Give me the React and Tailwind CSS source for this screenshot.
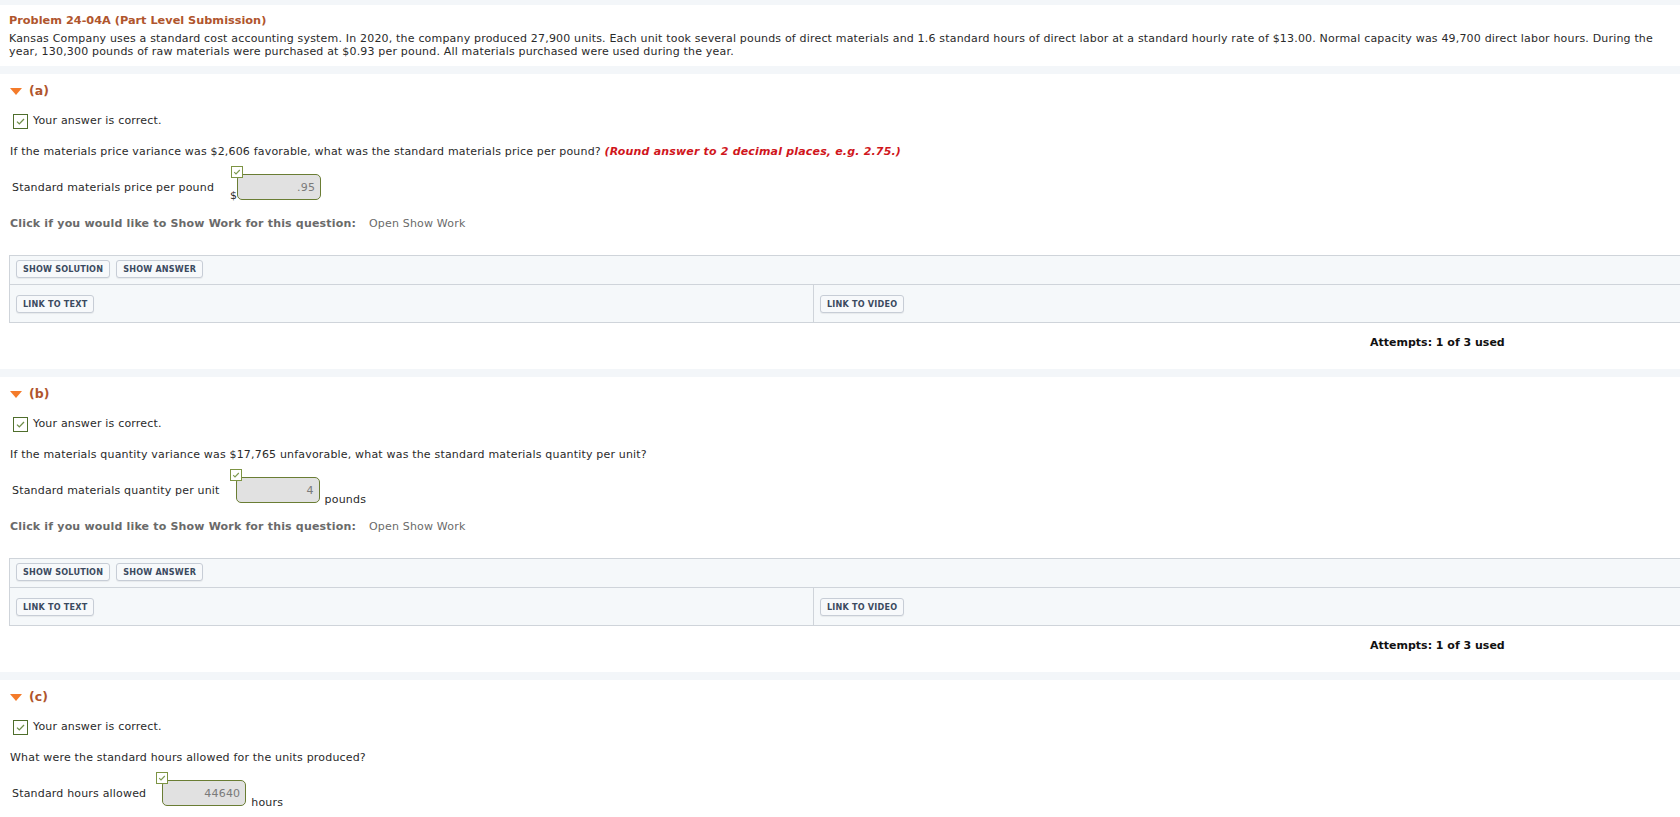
import React from "react";

const F = { fontFamily: '"DejaVu Sans", Verdana, sans-serif' };

function BigCheck() {
  return (
    <svg width="15" height="15" viewBox="0 0 15 15" className="block">
      <rect x="0.5" y="0.5" width="14" height="14" fill="#fff" stroke="#4f6e2c" strokeWidth="1" />
      <path d="M4 7.6 L6.3 9.9 L11 5" fill="none" stroke="#6f8f4a" strokeWidth="1.3" />
    </svg>
  );
}

function SmallCheck() {
  return (
    <svg width="12" height="12" viewBox="0 0 12 12" className="block">
      <rect x="0.5" y="0.5" width="11" height="11" fill="#fff" stroke="#7d9443" strokeWidth="1" />
      <path d="M3.2 6.2 L5 8 L8.8 4" fill="none" stroke="#7d9a4f" strokeWidth="1.1" />
    </svg>
  );
}

function Btn({ children }) {
  return (
    <span className="inline-flex items-center h-[18px] px-[6px] rounded-[3px] border border-[#c7cdd6] bg-[#f7f9fb] shadow-[0_1px_1px_rgba(0,0,0,0.06)] text-[8.1px] font-bold tracking-[0.2px] text-[#3b4a60] leading-none">
      {children}
    </span>
  );
}

function Section({ letter, question, label, value, prefix, suffix, last }) {
  return (
    <div className={"bg-white pt-[9px] " + (last ? "pb-[40px]" : "pb-[19px]")}>
      <div className="flex items-center h-[16px] pl-[10px]">
        <svg width="12" height="7" viewBox="0 0 12 7" className="block">
          <path d="M0 0 L12 0 L6 7 Z" fill="#f47b2a" />
        </svg>
        <span className="ml-[7px] text-[12.5px] font-bold tracking-normal text-[#b0552d] leading-[16px]">({letter})</span>
      </div>
      <div className="flex items-center mt-[15px] pl-[13px] h-[14px]">
        <BigCheck />
        <span className="ml-[5px] text-[11px] leading-[14px] text-[#2a2a2a]">Your answer is correct.</span>
      </div>
      <div className="mt-[17px] pl-[10px] text-[11px] leading-[14px] text-[#2a2a2a] whitespace-nowrap">{question}</div>
      <div className="flex items-center h-[25px] mt-[16px] pl-[12px]">
        <span className="text-[11px] leading-[14px] text-[#2a2a2a] whitespace-nowrap">{label}</span>
        <div className="ml-[16px] flex items-end h-[25px]">
          {prefix && <span className="text-[11px] leading-[11px] text-[#2a2a2a] translate-y-[1px] w-[7px]">{prefix}</span>}
          <div className="relative w-[84px] h-[26px] rounded-[5px] border border-[#6a7d34] bg-[#e1e1e1] flex items-center justify-end pr-[5px]">
            <span className="text-[11px] text-[#7a7a7a] leading-none">{value}</span>
            <div className="absolute top-[-9px] left-[-7px]">
              <SmallCheck />
            </div>
          </div>
          {suffix && <span className="ml-[5px] text-[11px] leading-[11px] text-[#2a2a2a] translate-y-[2px]">{suffix}</span>}
        </div>
      </div>
      <div className="flex items-center mt-[17px] pl-[10px] h-[14px] text-[11px] leading-[14px] text-[#6a6a6a] whitespace-nowrap">
        <span className="font-bold">Click if you would like to Show Work for this question:</span>
        <span className="ml-[13px]">Open Show Work</span>
      </div>
      <div className="mt-[24px] ml-[9px] w-[1700px] border border-[#cfd4da] bg-[#f5f8fa]">
        <div className="flex gap-[6px] h-[29px] pt-[4px] pl-[6px] border-b border-[#cfd4da]">
          <Btn>SHOW SOLUTION</Btn>
          <Btn>SHOW ANSWER</Btn>
        </div>
        <div className="flex h-[37px]">
          <div className="w-[804px] border-r border-[#cfd4da] pl-[6px] pt-[5px]">
            <Btn>LINK TO TEXT</Btn>
          </div>
          <div className="pl-[6px] pt-[5px]">
            <Btn>LINK TO VIDEO</Btn>
          </div>
        </div>
      </div>
      <div className="mt-[13px] h-[14px] pl-[1370px] text-[11px] leading-[14px] font-bold tracking-normal text-[#111] whitespace-nowrap">
        Attempts: 1 of 3 used
      </div>
    </div>
  );
}

export default function App() {
  return (
    <div style={F} className="w-[1680px] overflow-x-hidden bg-[#f3f6f9] pt-[5px] tracking-[0.18px]">
      <div className="bg-white pt-[8px] pb-[8px] pl-[9px]">
        <div className="text-[11.3px] font-bold leading-[16px] tracking-normal text-[#b0552d]">Problem 24-04A (Part Level Submission)</div>
        <div className="mt-[3px] text-[11px] leading-[13px] text-[#2a2a2a] whitespace-nowrap">
          Kansas Company uses a standard cost accounting system. In 2020, the company produced 27,900 units. Each unit took several pounds of direct materials and 1.6 standard hours of direct labor at a standard hourly rate of $13.00. Normal capacity was 49,700 direct labor hours. During the
          <br />
          year, 130,300 pounds of raw materials were purchased at $0.93 per pound. All materials purchased were used during the year.
        </div>
      </div>
      <div className="mt-[8px] flex flex-col gap-[8px]">
        <Section
          letter="a"
          question={
            <>
              If the materials price variance was $2,606 favorable, what was the standard materials price per pound?{" "}
              <span className="font-bold italic text-[#d0161c]">(Round answer to 2 decimal places, e.g. 2.75.)</span>
            </>
          }
          label="Standard materials price per pound"
          value=".95"
          prefix="$"
        />
        <Section
          letter="b"
          question="If the materials quantity variance was $17,765 unfavorable, what was the standard materials quantity per unit?"
          label="Standard materials quantity per unit"
          value="4"
          suffix="pounds"
        />
        <Section
          letter="c"
          question="What were the standard hours allowed for the units produced?"
          label="Standard hours allowed"
          value="44640"
          suffix="hours"
          last
        />
      </div>
    </div>
  );
}
